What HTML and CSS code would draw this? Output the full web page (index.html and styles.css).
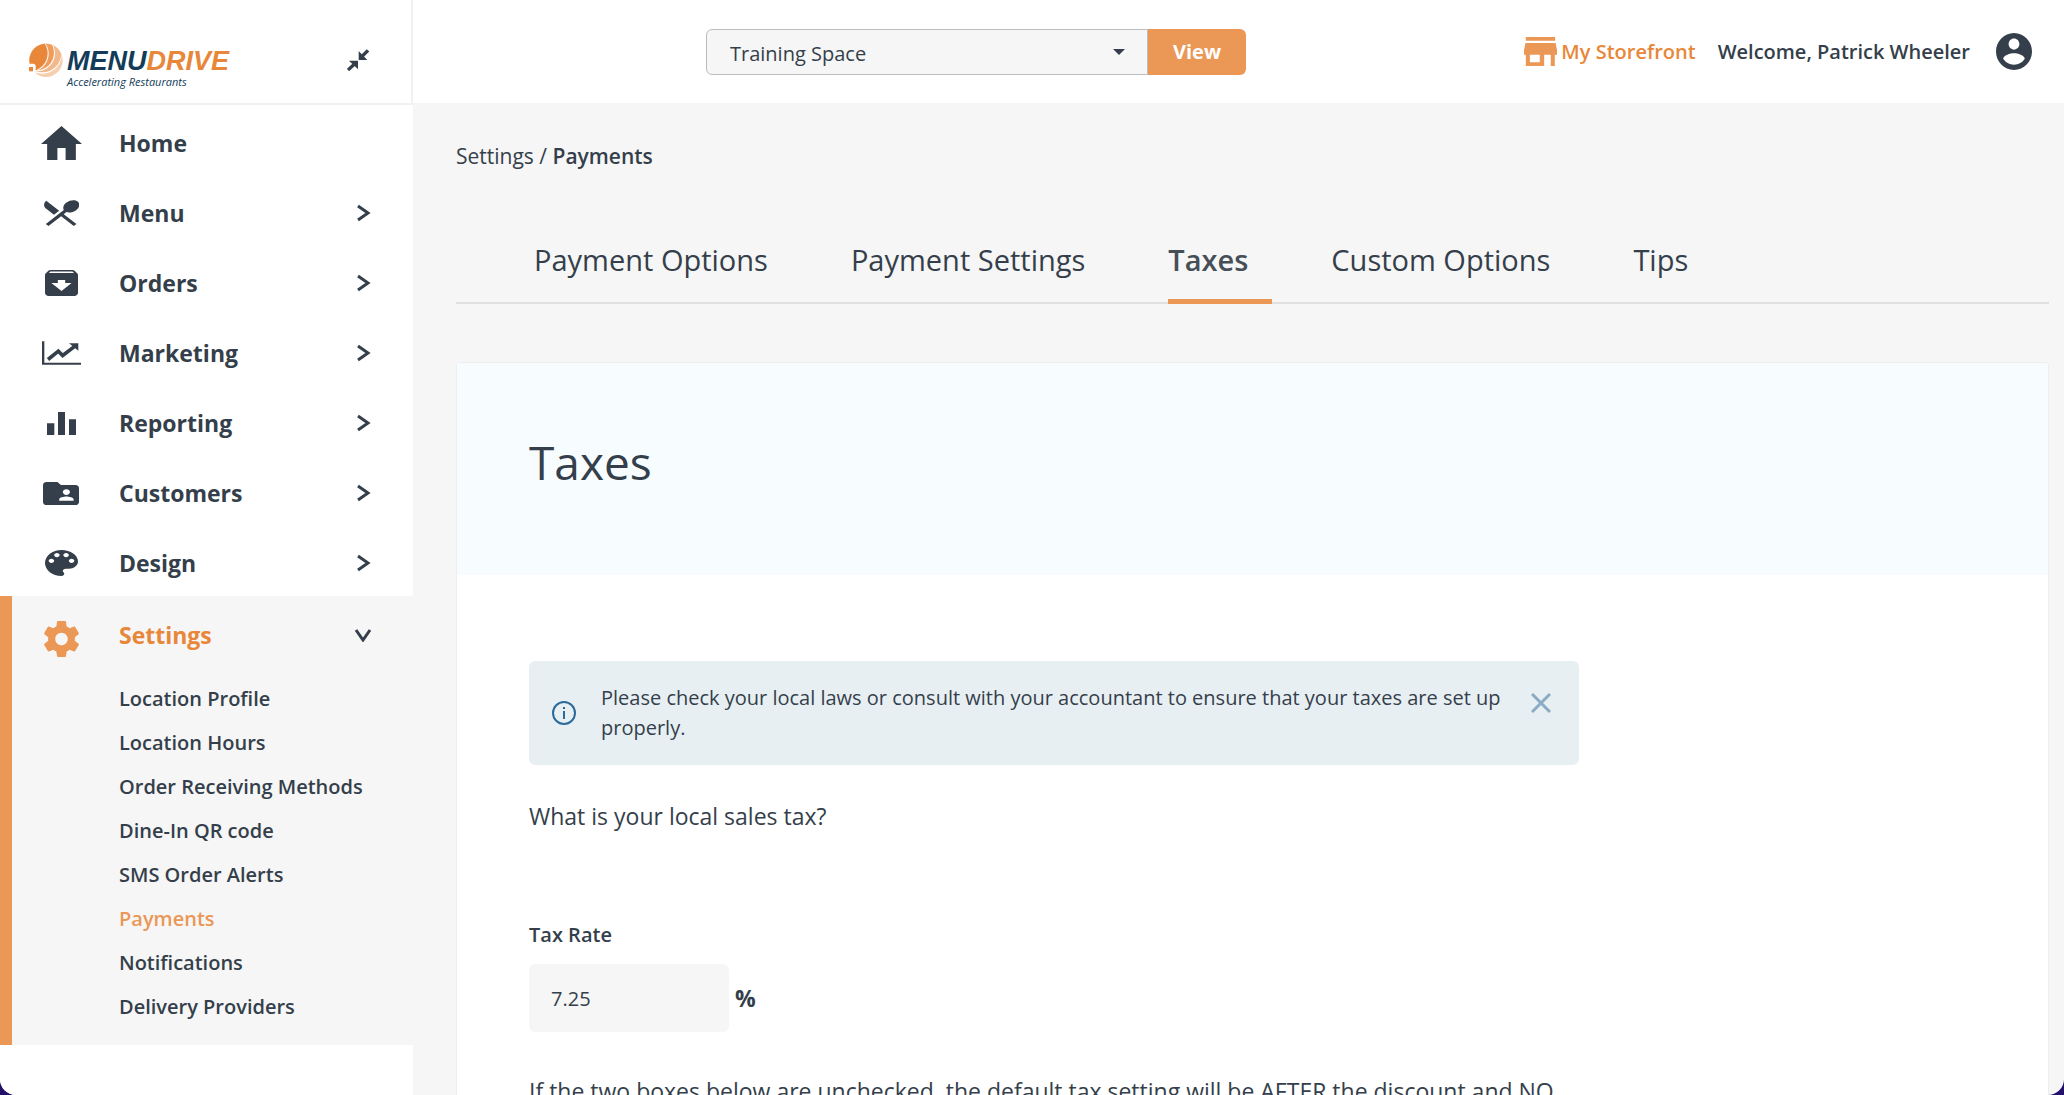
FILE: index.html
```html
<!DOCTYPE html>
<html lang="en">
<head>
    <meta charset="UTF-8">
    <meta name="viewport" content="width=device-width, initial-scale=1.0">
    <title>MenuDrive - Taxes</title>
    <link rel="stylesheet" href="styles.css">
</head>
<body>
    <div class="app">
        <!-- Sidebar -->
        <aside class="sidebar">
            <div class="sidebar-header">
                <a href="#" class="logo">
                    <svg class="logo-mark" viewBox="0 0 102 105" aria-hidden="true">
                        <defs>
                            <clipPath id="globe"><circle cx="51" cy="52" r="50"/></clipPath>
                        </defs>
                        <g clip-path="url(#globe)">
                            <rect width="102" height="105" fill="#f6cfae"/>
                            <circle cx="40" cy="34" r="58" fill="#fff"/>
                            <circle cx="40" cy="31" r="57" fill="#f2b88c"/>
                            <circle cx="24" cy="31" r="54" fill="#fff"/>
                            <circle cx="22" cy="29" r="53" fill="#ee9d5f"/>
                            <circle cx="5" cy="32" r="54" fill="#fff"/>
                            <circle cx="2" cy="31" r="54" fill="#e8873a"/>
                        </g>
                        <path d="M0 62h12q8 0 8 8v20H0z" fill="#fff"/>
                        <rect y="72" width="12" height="13" fill="#e8873a"/>
                    </svg>
                    <span class="logo-text">
                        <span class="logo-name">MENU<span class="logo-accent">DRIVE</span></span>
                        <span class="logo-tagline">Accelerating Restaurants</span>
                    </span>
                </a>
                <button class="collapse-btn" aria-label="Collapse menu">
                    <svg width="22" height="22" viewBox="0 0 66 66" fill="currentColor" stroke="currentColor">
                        <path d="M35 6v27h26z" stroke="none"/>
                        <path d="M43 24L63 4" stroke-width="10"/>
                        <path d="M6 35h27v26z" stroke="none"/>
                        <path d="M25 43L3 63" stroke-width="10"/>
                    </svg>
                </button>
            </div>

            <nav class="nav">
                <a href="#" class="nav-item">
                    <span class="nav-icon"><svg width="41" height="34" viewBox="2 3 20 17" preserveAspectRatio="none"><path d="M10 20v-6h4v6h5v-8h3L12 3 2 12h3v8z"/></svg></span>
                    <span class="nav-label">Home</span>
                </a>
                <a href="#" class="nav-item">
                    <span class="nav-icon"><svg width="35" height="26" viewBox="2.7 3 19 18.3" preserveAspectRatio="none"><path d="M8.1 13.34l2.83-2.83L3.91 3.5c-1.56 1.56-1.56 4.09 0 5.66l4.19 4.18zm6.78-1.81c1.53.71 3.68.21 5.27-1.38 1.91-1.91 2.28-4.65.81-6.12-1.46-1.46-4.2-1.1-6.12.81-1.59 1.59-2.09 3.74-1.38 5.27L3.7 19.87l1.41 1.41L12 14.41l6.88 6.88 1.41-1.41L13.41 13l1.47-1.47z"/></svg></span>
                    <span class="nav-label">Menu</span>
                    <svg class="chevron" width="14" height="18" viewBox="0 0 14 18"><path d="M1 2l10 7-10 7"/></svg>
                </a>
                <a href="#" class="nav-item">
                    <span class="nav-icon"><svg width="33" height="26" viewBox="3 3 18 18" preserveAspectRatio="none"><path d="M20.54 5.23l-1.39-1.68C18.88 3.21 18.47 3 18 3H6c-.47 0-.88.21-1.16.55L3.46 5.23C3.17 5.57 3 6.02 3 6.5V19c0 1.1.9 2 2 2h14c1.1 0 2-.9 2-2V6.5c0-.48-.17-.93-.46-1.27zM12 17.5L6.5 12H10v-2h4v2h3.5L12 17.5zM5.12 5l.81-1h12l.94 1H5.12z"/></svg></span>
                    <span class="nav-label">Orders</span>
                    <svg class="chevron" width="14" height="18" viewBox="0 0 14 18"><path d="M1 2l10 7-10 7"/></svg>
                </a>
                <a href="#" class="nav-item">
                    <span class="nav-icon"><svg width="39" height="24" viewBox="0 0 117 71"><path d="M0 0h7v65h110v6H0z"/><path d="M81 6h28v23z"/><path d="M18 55l31-25 13 13 38-29" fill="none" stroke="currentColor" stroke-width="11"/></svg></span>
                    <span class="nav-label">Marketing</span>
                    <svg class="chevron" width="14" height="18" viewBox="0 0 14 18"><path d="M1 2l10 7-10 7"/></svg>
                </a>
                <a href="#" class="nav-item">
                    <span class="nav-icon"><svg width="29" height="23" viewBox="0 0 87 69"><path d="M0 34h22v35H0zM33 0h21v69H33zM66 22h21v47H66z"/></svg></span>
                    <span class="nav-label">Reporting</span>
                    <svg class="chevron" width="14" height="18" viewBox="0 0 14 18"><path d="M1 2l10 7-10 7"/></svg>
                </a>
                <a href="#" class="nav-item">
                    <span class="nav-icon"><svg width="36" height="23" viewBox="2 4 20 16" preserveAspectRatio="none"><path d="M20 6h-8l-2-2H4c-1.1 0-1.99.9-1.99 2L2 18c0 1.1.9 2 2 2h16c1.1 0 2-.9 2-2V8c0-1.1-.9-2-2-2zm-5 3c1.1 0 2 .9 2 2s-.9 2-2 2-2-.9-2-2 .9-2 2-2zm4 8h-8v-1c0-1.33 2.67-2 4-2s4 .67 4 2v1z"/></svg></span>
                    <span class="nav-label">Customers</span>
                    <svg class="chevron" width="14" height="18" viewBox="0 0 14 18"><path d="M1 2l10 7-10 7"/></svg>
                </a>
                <a href="#" class="nav-item">
                    <span class="nav-icon"><svg width="33" height="26" viewBox="3 3 18 18" preserveAspectRatio="none"><path d="M12 3c-4.97 0-9 4.03-9 9s4.03 9 9 9c.83 0 1.5-.67 1.5-1.5 0-.39-.15-.74-.39-1.01-.23-.26-.38-.61-.38-.99 0-.83.67-1.5 1.5-1.5H16c2.76 0 5-2.24 5-5 0-4.42-4.03-8-9-8zm-5.5 9c-.83 0-1.5-.67-1.5-1.5S5.67 9 6.5 9 8 9.67 8 10.5 7.33 12 6.5 12zm3-4C8.67 8 8 7.33 8 6.5S8.67 5 9.5 5s1.5.67 1.5 1.5S10.33 8 9.5 8zm5 0c-.83 0-1.5-.67-1.5-1.5S13.67 5 14.5 5s1.5.67 1.5 1.5S15.33 8 14.5 8zm3 4c-.83 0-1.5-.67-1.5-1.5S16.67 9 17.5 9s1.5.67 1.5 1.5-.67 1.5-1.5 1.5z"/></svg></span>
                    <span class="nav-label">Design</span>
                    <svg class="chevron" width="14" height="18" viewBox="0 0 14 18"><path d="M1 2l10 7-10 7"/></svg>
                </a>

                <div class="nav-section">
                    <a href="#" class="nav-item active">
                        <span class="nav-icon"><svg width="35" height="36" viewBox="2.2 2 19.6 20" preserveAspectRatio="none"><path d="M19.43 12.98c.04-.32.07-.64.07-.98s-.03-.66-.07-.98l2.11-1.65c.19-.15.24-.42.12-.64l-2-3.46c-.12-.22-.39-.3-.61-.22l-2.49 1c-.52-.4-1.08-.73-1.69-.98l-.38-2.65C14.46 2.18 14.25 2 14 2h-4c-.25 0-.46.18-.49.42l-.38 2.65c-.61.25-1.17.59-1.69.98l-2.49-1c-.23-.09-.49 0-.61.22l-2 3.46c-.13.22-.07.49.12.64l2.11 1.65c-.04.32-.07.65-.07.98s.03.66.07.98l-2.11 1.65c-.19.15-.24.42-.12.64l2 3.46c.12.22.39.3.61.22l2.49-1c.52.4 1.08.73 1.69.98l.38 2.65c.03.24.24.42.49.42h4c.25 0 .46-.18.49-.42l.38-2.65c.61-.25 1.17-.59 1.69-.98l2.49 1c.23.09.49 0 .61-.22l2-3.46c.12-.22.07-.49-.12-.64l-2.11-1.65zM12 15.5c-1.93 0-3.5-1.57-3.5-3.5s1.57-3.5 3.5-3.5 3.5 1.57 3.5 3.5-1.57 3.5-3.5 3.5z"/></svg></span>
                        <span class="nav-label">Settings</span>
                        <svg class="chevron" width="18" height="14" viewBox="0 0 18 14"><path d="M2 2l7 10 7-10"/></svg>
                    </a>
                    <ul class="submenu">
                        <li><a href="#">Location Profile</a></li>
                        <li><a href="#">Location Hours</a></li>
                        <li><a href="#">Order Receiving Methods</a></li>
                        <li><a href="#">Dine-In QR code</a></li>
                        <li><a href="#">SMS Order Alerts</a></li>
                        <li><a href="#" class="current">Payments</a></li>
                        <li><a href="#">Notifications</a></li>
                        <li><a href="#">Delivery Providers</a></li>
                    </ul>
                </div>
            </nav>
        </aside>

        <div class="page">
            <!-- Top bar -->
            <header class="topbar">
                <form class="location-form">
                    <div class="select-wrap">
                        <select class="location-select" aria-label="Location">
                            <option>Training Space</option>
                        </select>
                    </div>
                    <button type="button" class="view-btn">View</button>
                </form>
                <div class="account">
                    <a href="#" class="storefront">
                        <svg width="33" height="29" viewBox="0 0 90 87" preserveAspectRatio="none" fill="currentColor"><path d="M5 0h80v11H5zM4 18h82l4 21v14H84v34H73V53H55v34H5V53H0V39zM16 53v23h27V53z"/></svg>
                        <span>My Storefront</span>
                    </a>
                    <span class="welcome">Welcome, Patrick Wheeler</span>
                    <button class="avatar-btn" aria-label="Account">
                        <svg width="36" height="37" viewBox="2 2 20 20" preserveAspectRatio="none" fill="currentColor"><path d="M12 2C6.48 2 2 6.48 2 12s4.48 10 10 10 10-4.48 10-10S17.52 2 12 2zm0 3c1.66 0 3 1.34 3 3s-1.34 3-3 3-3-1.34-3-3 1.34-3 3-3zm0 14.2c-2.5 0-4.71-1.28-6-3.22.03-1.99 4-3.08 6-3.08 1.99 0 5.97 1.09 6 3.08-1.29 1.94-3.5 3.22-6 3.22z"/></svg>
                    </button>
                </div>
            </header>

            <main class="content">
                <div class="breadcrumb"><a href="#">Settings</a> / <strong>Payments</strong></div>

                <nav class="tabs">
                    <a href="#" class="tab">Payment Options</a>
                    <a href="#" class="tab">Payment Settings</a>
                    <a href="#" class="tab selected">Taxes</a>
                    <a href="#" class="tab">Custom Options</a>
                    <a href="#" class="tab">Tips</a>
                </nav>

                <section class="card">
                    <div class="card-header">
                        <h1>Taxes</h1>
                    </div>
                    <div class="card-body">
                        <div class="alert">
                            <svg class="alert-icon" width="26" height="26" viewBox="0 0 26 26"><circle cx="13" cy="13" r="11" fill="none" stroke="currentColor" stroke-width="2"/><path d="M12 7h2v2h-2zM12 11h2v8h-2z" fill="currentColor"/></svg>
                            <p>Please check your local laws or consult with your accountant to ensure that your taxes are set up properly.</p>
                            <button class="alert-close" aria-label="Close">
                                <svg width="20" height="20" viewBox="0 0 20 20"><path d="M1 1l18 18M19 1L1 19" stroke="currentColor" stroke-width="3"/></svg>
                            </button>
                        </div>

                        <p class="question">What is your local sales tax?</p>

                        <label class="field-label" for="taxRate">Tax Rate</label>
                        <div class="field">
                            <input class="field-input" type="text" id="taxRate" value="7.25">
                            <span class="field-unit">%</span>
                        </div>

                        <p class="hint">If the two boxes below are unchecked, the default tax setting will be AFTER the discount and NO</p>
                    </div>
                </section>
            </main>
        </div>
    </div>
</body>
</html>
```
FILE: styles.css
```css
/* General Styles */
* {
    box-sizing: border-box;
}

body {
    margin: 0;
    font-family: 'Open Sans', sans-serif;
    font-size: 20px;
    color: #343f4b;
    background: #22106b;
}

a {
    color: inherit;
    text-decoration: none;
}

button {
    font-family: inherit;
    color: inherit;
    background: none;
    border: none;
    padding: 0;
    cursor: pointer;
}

svg {
    display: block;
    flex-shrink: 0;
}

p, ul {
    margin: 0;
    padding: 0;
}

.app {
    display: flex;
    height: 100vh;
    overflow: hidden;
    background: #f6f6f6;
    border-radius: 0 0 16px 16px;
}

/* Sidebar */
.sidebar {
    width: 413px;
    flex-shrink: 0;
    background: #fff;
}

.sidebar-header {
    display: flex;
    align-items: center;
    justify-content: space-between;
    height: 105px;
    padding: 16px 42px 0 29px;
    border-right: 2px solid #f2f2f2;
    border-bottom: 2px solid #f2f2f2;
}

.logo {
    display: flex;
    gap: 4px;
    padding-top: 12px;
}

.logo-mark {
    width: 34px;
    height: 35px;
}

.logo-text {
    display: flex;
    flex-direction: column;
    padding-top: 5px;
}

.logo-name {
    font: italic bold 27px/27px 'Liberation Sans', sans-serif;
    color: #123c5a;
}

.logo-accent {
    color: #e8873a;
}

.logo-tagline {
    font-size: 11px;
    line-height: 14px;
    font-style: italic;
    color: #123c5a;
}

.nav-item {
    display: flex;
    align-items: center;
    height: 70px;
    padding: 6px 42px 0 31px;
    font-size: 23px;
    font-weight: 700;
}

.nav-icon {
    display: flex;
    justify-content: center;
    width: 60px;
    margin-right: 28px;
}

.nav-icon svg {
    fill: currentColor;
}

.nav-label {
    flex: 1;
}

.chevron {
    fill: none;
    stroke: #343f4b;
    stroke-width: 3;
}

.nav-section {
    margin-top: 1px;
    background: #f6f6f6;
    border-left: 12px solid #eb9756;
    padding-bottom: 16px;
}

.nav-section .nav-item {
    padding: 8px 41px 0 19px;
}

.nav-item.active {
    color: #e8873a;
}

.nav-item.active .nav-icon {
    color: #eb9756;
    padding-top: 8px;
}

.submenu {
    list-style: none;
    padding: 11px 0 0 107px;
    line-height: 44px;
    font-weight: 600;
}

.submenu a {
    display: block;
}

.submenu .current {
    color: #eb9756;
}

/* Top bar */
.page {
    flex: 1;
    min-width: 0;
}

.topbar {
    display: flex;
    align-items: center;
    justify-content: space-between;
    height: 103px;
    padding: 0 32px 0 293px;
    background: #fff;
}

.location-form {
    display: flex;
    width: 540px;
    height: 46px;
}

.select-wrap {
    position: relative;
    flex: 1;
}

.select-wrap::after {
    content: "";
    position: absolute;
    top: 20px;
    right: 23px;
    border: 6px solid transparent;
    border-top-color: #343f4b;
    border-bottom: none;
    pointer-events: none;
}

.location-select {
    width: 100%;
    height: 100%;
    appearance: none;
    padding: 4px 23px 0;
    font: 20px 'Open Sans', sans-serif;
    color: #343f4b;
    background: #f6f6f6;
    border: 1px solid #bcbcbc;
    border-radius: 6px 0 0 6px;
}

.view-btn {
    width: 98px;
    font-size: 20px;
    font-weight: 700;
    color: #fff;
    background: #eb9756;
    border-radius: 0 6px 6px 0;
}

.account {
    display: flex;
    align-items: center;
    font-weight: 600;
}

.storefront {
    display: flex;
    align-items: center;
    gap: 4px;
    margin-right: 22px;
    color: #e8873a;
}

.storefront svg {
    color: #eb9756;
}

.avatar-btn {
    margin-left: 26px;
}

/* Content */
.content {
    padding: 36px 15px 0 43px;
}

.breadcrumb {
    font-size: 21px;
    line-height: 34px;
}

.breadcrumb strong {
    font-weight: 600;
}

.tabs {
    display: flex;
    gap: 59px;
    margin-top: 48px;
    padding-left: 78px;
    border-bottom: 2px solid #e0e0e0;
}

.tab {
    padding: 20px 24px 20px 0;
    margin-bottom: -2px;
    font-size: 29px;
    line-height: 38px;
    border-bottom: 5px solid transparent;
}

.tab.selected {
    font-weight: 600;
    color: #464f58;
    border-color: #eb9756;
}

.card {
    margin-top: 58px;
    background: #fff;
    border: 1px solid #eeeeee;
    border-bottom: none;
    border-radius: 4px 4px 0 0;
}

.card-header {
    padding: 64px 72px 78px;
    background: #f7fcff;
}

.card-header h1 {
    margin: 0;
    font-size: 46px;
    line-height: 70px;
    font-weight: 400;
}

.card-body {
    max-width: 1194px;
    padding: 86px 72px;
}

.alert {
    display: flex;
    align-items: flex-start;
    padding: 22px 28px 22px 22px;
    line-height: 30px;
    background: #e8eff3;
    border-radius: 6px;
}

.alert-icon {
    align-self: center;
    margin-right: 24px;
    color: #2b6a9b;
}

.alert p {
    flex: 1;
}

.alert-close {
    margin: 10px 0 0 24px;
    color: #8aabc4;
}

.question {
    margin-top: 34px;
    font-size: 23px;
    line-height: 34px;
}

.field-label {
    display: block;
    margin-top: 87px;
    font-weight: 600;
    line-height: 30px;
}

.field {
    display: flex;
    align-items: center;
    gap: 6px;
    margin-top: 14px;
}

.field-input {
    width: 200px;
    height: 68px;
    padding: 0 22px;
    font: 20px 'Open Sans', sans-serif;
    color: #343f4b;
    background: #f6f6f6;
    border: none;
    border-radius: 6px;
}

.field-unit {
    font-size: 23px;
    font-weight: 700;
}

.hint {
    margin-top: 42px;
    font-size: 23px;
    line-height: 34px;
}
```
